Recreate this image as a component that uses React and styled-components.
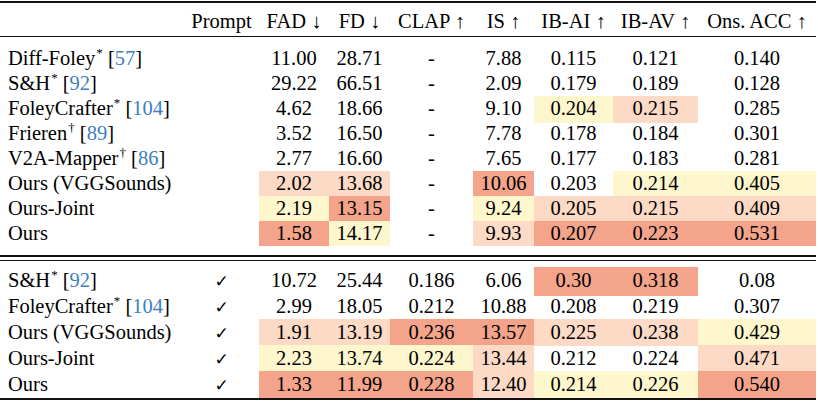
import React from "react";
import styled, { createGlobalStyle } from "styled-components";

const GlobalStyle = createGlobalStyle`
  html, body {
    margin: 0;
    padding: 0;
    background: #fff;
  }
`;

const COLS = "184px 75px 70px 61px 83px 61px 79px 85px 118px";

const tones = {
  y: "#fef7cd",
  p: "#fcdac6",
  s: "#f4a48b",
};

const headers = ["Prompt", "FAD ↓", "FD ↓", "CLAP ↑", "IS ↑", "IB-AI ↑", "IB-AV ↑", "Ons. ACC ↑"];

// t: one letter per metric column, y = yellow, p = peach, s = salmon, - = none
const topRows = [
  { name: "Diff-Foley", mark: "*", cite: "57", vals: ["11.00", "28.71", "-", "7.88", "0.115", "0.121", "0.140"], t: "-------" },
  { name: "S&H", mark: "*", cite: "92", vals: ["29.22", "66.51", "-", "2.09", "0.179", "0.189", "0.128"], t: "-------" },
  { name: "FoleyCrafter", mark: "*", cite: "104", vals: ["4.62", "18.66", "-", "9.10", "0.204", "0.215", "0.285"], t: "----yp-" },
  { name: "Frieren", mark: "†", cite: "89", vals: ["3.52", "16.50", "-", "7.78", "0.178", "0.184", "0.301"], t: "-------" },
  { name: "V2A-Mapper", mark: "†", cite: "86", vals: ["2.77", "16.60", "-", "7.65", "0.177", "0.183", "0.281"], t: "-------" },
  { name: "Ours (VGGSounds)", vals: ["2.02", "13.68", "-", "10.06", "0.203", "0.214", "0.405"], t: "pp-s-yy" },
  { name: "Ours-Joint", vals: ["2.19", "13.15", "-", "9.24", "0.205", "0.215", "0.409"], t: "ys-yppp" },
  { name: "Ours", vals: ["1.58", "14.17", "-", "9.93", "0.207", "0.223", "0.531"], t: "sy-psss" },
];

const bottomRows = [
  { name: "S&H", mark: "*", cite: "92", vals: ["10.72", "25.44", "0.186", "6.06", "0.30", "0.318", "0.08"], t: "----ss-" },
  { name: "FoleyCrafter", mark: "*", cite: "104", vals: ["2.99", "18.05", "0.212", "10.88", "0.208", "0.219", "0.307"], t: "-------" },
  { name: "Ours (VGGSounds)", vals: ["1.91", "13.19", "0.236", "13.57", "0.225", "0.238", "0.429"], t: "ppssppy" },
  { name: "Ours-Joint", vals: ["2.23", "13.74", "0.224", "13.44", "0.212", "0.224", "0.471"], t: "yyyp--p" },
  { name: "Ours", vals: ["1.33", "11.99", "0.228", "12.40", "0.214", "0.226", "0.540"], t: "ssspyys" },
];

export default function App() {
  return (
    <Page>
      <GlobalStyle />
      <Table>
        <Rule $w={2} $mb={6} />
        <Row>
          <Cell $align="left" />
          {headers.map((h) => (
            <Cell key={h}>{h}</Cell>
          ))}
        </Row>
        <Rule $w={1} $mt={2} $mb={9} />
        {topRows.map((r) => (
          <DataRow key={r.name} row={r} />
        ))}
        <Rule $w={1.5} $mt={9} $mb={3} />
        <Rule $w={1.5} $mb={6} />
        {bottomRows.map((r) => (
          <DataRow key={r.name} row={r} prompt $h={26} />
        ))}
        <Rule $w={2} $mt={1} />
      </Table>
    </Page>
  );
}

function DataRow({ row, prompt, $h }) {
  return (
    <Row $h={$h}>
      <Cell $align="left">
        {row.name}
        {row.mark && <Sup>{row.mark}</Sup>}
        {row.cite && (
          <>
            {" "}[<Cite>{row.cite}</Cite>]
          </>
        )}
      </Cell>
      <Cell>{prompt && <Check>✓</Check>}</Cell>
      {row.vals.map((v, i) => (
        <Cell key={i} $tone={tones[row.t[i]]}>
          {v}
        </Cell>
      ))}
    </Row>
  );
}

const Page = styled.div`
  width: 818px;
  height: 405px;
  background: #fff;
  font-family: "Liberation Serif", "Times New Roman", serif;
  color: #000;
`;

const Table = styled.div`
  width: 816px;
  display: flex;
  flex-direction: column;
  padding-top: 1px;
`;

const Rule = styled.div`
  height: ${(p) => p.$w}px;
  background: #111;
  margin-top: ${(p) => p.$mt || 0}px;
  margin-bottom: ${(p) => p.$mb || 0}px;
`;

const Row = styled.div`
  display: grid;
  grid-template-columns: ${COLS};
  height: ${(p) => p.$h || 25}px;
  font-size: 20.5px;
  line-height: ${(p) => p.$h || 25}px;
`;

const Cell = styled.div`
  text-align: ${(p) => p.$align || "center"};
  padding-left: ${(p) => (p.$align === "left" ? "8px" : "0")};
  background: ${(p) => p.$tone || "transparent"};
  white-space: nowrap;
`;

const Sup = styled.span`
  font-size: 13px;
  position: relative;
  top: -8px;
  margin-left: 1px;
`;

const Cite = styled.span`
  color: #3d7ebf;
`;

const Check = styled.span`
  font-family: "DejaVu Sans", sans-serif;
  font-size: 17px;
`;
